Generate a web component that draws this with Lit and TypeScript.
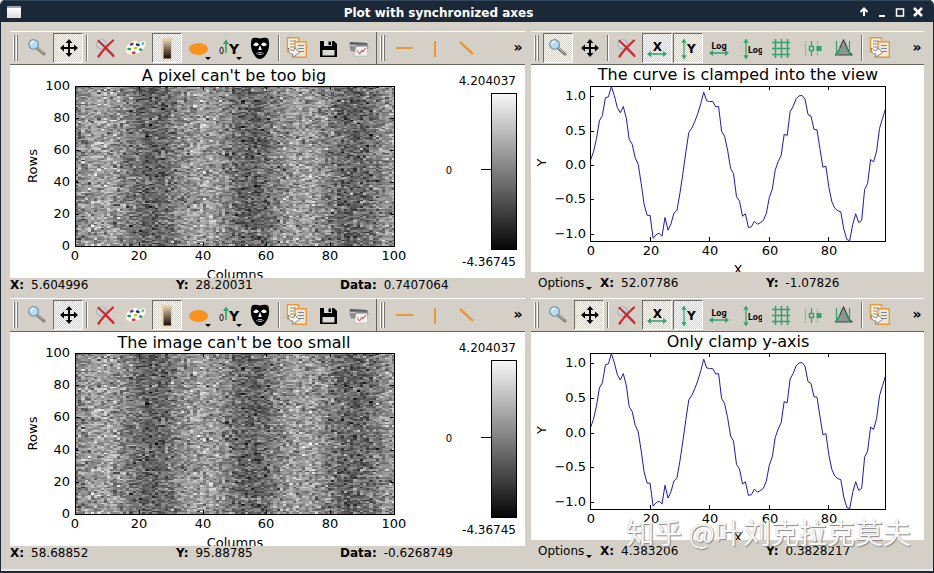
import { LitElement, html, svg, css, nothing } from "lit";
import type { TemplateResult, SVGTemplateResult } from "lit";
import { customElement, property } from "lit/decorators.js";
import { classMap } from "lit/directives/class-map.js";

const GREEN = "#2fa36b";
const ORANGE = "#e6993a";

const lens = svg`
  <path d="M12 12 L19 18" stroke="#8b8378" stroke-width="3" stroke-linecap="round"/>
  <path d="M13 12 L18 16.5" stroke="#c9c4ba" stroke-width="1" stroke-linecap="round"/>
  <circle cx="8.6" cy="8.4" r="4.8" fill="#b4dcf2" stroke="#8299ac" stroke-width="1.3"/>
  <path d="M5.6 8.4 A3.2 3.2 0 0 1 9 5.4" fill="none" stroke="#f2fbff" stroke-width="1.5"/>`;

const hArrow = svg`<path d="M2 18 l4 -3 v2.2 h12 v-2.2 l4 3 l-4 3 v-2.2 h-12 v2.2 z" fill="${GREEN}"/>`;
const vArrow = svg`<path d="M8 2.5 l2.6 4.2 h-2 v12.6 h2 L8 23.5 l-2.6 -4.2 h2 V6.7 h-2 z" fill="${GREEN}"/>`;

const ICONS: Record<string, SVGTemplateResult> = {
  zoom: lens,
  pan: svg`
    <path d="M5 12 H21 M13 4 V20" stroke="#000" stroke-width="2"/>
    <path d="M4 12 l4 -3.4 v6.8 z M22 12 l-4 -3.4 v6.8 z M13 3 l-3.4 4 h6.8 z M13 21 l-3.4 -4 h6.8 z"/>`,
  reset: svg`
    <g opacity=".45">${lens}</g>
    <path d="M5.5 5 C10 9 15 14 20.5 20 M20 4.5 C15 9 10 14 5.5 20.5" fill="none" stroke="#cf2531" stroke-width="2.2" stroke-linecap="round"/>`,
  palette: svg`
    <path d="M1.5 14.5 C1 10 6 5 11 4.5 C13.5 4.3 13.5 6.8 15.5 6.3 C17.5 5.8 19 3.4 21 5 C24 8 20.5 14 15 17 C10 20 2 20 1.5 14.5 z" fill="#fffdf6" stroke="#efc68f" stroke-width=".8"/>
    <g stroke-width="2.5" stroke-linecap="round">
      <path d="M7 8.5 l1.5 -.6" stroke="#5b3fa8"/><path d="M13 8.6 l1.5 .3" stroke="#1a2f7c"/>
      <path d="M18.6 8 l.6 -.7" stroke="#35c4dc"/><path d="M4.5 13 l1.4 0" stroke="#2e9b52"/>
      <path d="M11 12.3 l1.2 -.4" stroke="#b4d62b"/><path d="M16 13.5 l1.2 .2" stroke="#1c9e86"/>
      <path d="M9 16.7 l1.4 0" stroke="#d1356f"/>
    </g>`,
  colormap: svg`
    <defs><linearGradient id="cm" x1="0" y1="0" x2="0" y2="1">
      <stop offset="0" stop-color="#e9d6bd"/><stop offset=".45" stop-color="#857363"/><stop offset="1" stop-color="#0c0706"/>
    </linearGradient></defs>
    <rect x="8" y="3" width="8.5" height="20" fill="url(#cm)" stroke="#f3c48b" stroke-width="1.2"/>`,
  ellipse: svg`<ellipse cx="12.5" cy="13" rx="9.6" ry="6" fill="#f7931e"/>`,
  yaxis: svg`
    <text x="2" y="18" font-size="8">0</text>
    <path d="M9 17 V7" stroke="${GREEN}" stroke-width="1.6"/><path d="M9 3.5 l3 4.5 h-6 z" fill="${GREEN}"/>
    <text x="12" y="18" font-size="14" font-weight="bold">Y</text>`,
  mask: svg`
    <path d="M4 2.5 C7 1 9 2.4 12 2.4 S17 1 20 2.5 C22 8 21 12 19.5 16 C17.5 20 15 23 12 23 S6.5 20 4.5 16 C3 12 2 8 4 2.5 z"/>
    <path d="M5 9 Q8 4.5 11 8.5 Q8.5 11.5 5 9 z M19 9 Q16 4.5 13 8.5 Q15.5 11.5 19 9 z" fill="#fff"/>
    <path d="M12 9 l1.8 5 h-3.6 z M8 17.5 q4 -2.6 8 0 q-4 2.7 -8 0 z" fill="#fff"/>
    <path d="M9 17.5 h6" stroke="#000" stroke-width=".8"/>`,
  copy: svg`
    <g stroke="${ORANGE}" stroke-width="1.4">
      <path d="M2.5 1.7 h11 v14 h-11 z" fill="#fdf4e3"/>
      <path d="M10 5.7 h11.3 v15.5 h-11.3 z" fill="#eee7da"/>
    </g>
    <path d="M5 5 h6 M5 8 h4 M5 11 h4 M13 9.5 h6 M13 12.5 h6 M14 15.5 h5" stroke="#7d8790" stroke-width="1.2"/>
    <path d="M3.5 12 C3 16 5 18 8 18 L7.5 21.5 L14.5 16.5 L9.5 11.5 L9 14.5 C6.5 14.8 5 14 3.5 12 z" fill="#fff" stroke="#6f675c" stroke-width=".8"/>`,
  save: svg`
    <path d="M4 5 h14 l3 3 v13 h-17 z"/>
    <path d="M8 5 h8 v5 h-8 z M6.5 14 h12 v5.5 h-12 z" fill="#dedad3"/>
    <path d="M12.5 5.5 h2.5 v3.6 h-2.5 z"/>`,
  print: svg`
    <path d="M3 6 l17 1 l1.5 4 l-2 4.5 h-15.5 l-1.5 -5 z" fill="#8a8c8e"/>
    <path d="M3 6 l17 1 l.7 1.8 l-18 -.6 z" fill="#5c5f63"/>
    <path d="M2.6 9.5 l6 0" stroke="#c9cbcc" stroke-width="1"/>
    <path d="M9 10.5 h11 l.8 9.5 h-13.5 z" fill="#f5f2f2" stroke="#b5b0b0" stroke-width=".6"/>
    <path d="M10 14.5 l2.5 3.5 l2.5 -4 l1 2 l2.5 -4" fill="none" stroke="#d5404c" stroke-width="1"/>`,
  hline: svg`<path d="M4 12 H21" stroke="${ORANGE}" stroke-width="2"/>`,
  vline: svg`<path d="M12 5 V21" stroke="${ORANGE}" stroke-width="2"/>`,
  dline: svg`<path d="M6 6 L19 18" stroke="${ORANGE}" stroke-width="2.4"/>`,
  xauto: svg`<text x="12.5" y="15" font-size="12" font-weight="bold" text-anchor="middle">X</text>${hArrow}`,
  yauto: svg`${vArrow}<text x="11" y="17" font-size="12" font-weight="bold">Y</text>`,
  xlog: svg`<text class="log" x="12" y="13" text-anchor="middle">Log</text><g transform="translate(0 -1)">${hArrow}</g>`,
  ylog: svg`${vArrow}<text class="log" x="10" y="17">Log</text>`,
  grid: svg`<path d="M6.5 3 V22 M12.5 3 V22 M18.5 3 V22 M3 6.5 H21 M3 12.5 H21 M3 18.5 H21" stroke="${GREEN}" stroke-width="1.5"/>`,
  points: svg`
    <path d="M5.5 5 V20 M17.5 5 V20" stroke="#82c5a4" stroke-width="1.2"/>
    <path d="M11.5 5 V20" stroke="${GREEN}" stroke-width="1.2"/>
    <rect x="9.5" y="10.5" width="4" height="4" fill="#d4d0c8" stroke="${GREEN}" stroke-width="1.4"/>
    <rect x="16.5" y="10" width="5" height="5" fill="${GREEN}"/>`,
  peak: svg`
    <path d="M4 19 C8 17 9.5 9 12.5 4 C15.5 9 17 17 21.5 19 z" fill="#8e9492" stroke="#3d4442" stroke-width="1.2"/>
    <path d="M5.5 5 V19 L9 12 M18.5 5 V19 L15 11" fill="none" stroke="${GREEN}" stroke-width="1.2"/>`,
};

interface Tool {
  icon: string;
  label: string;
  menu?: boolean;
}
type Item = Tool | "sep";

const IMAGE_TOOLS: Item[] = [
  { icon: "zoom", label: "Zoom" },
  { icon: "pan", label: "Pan" },
  "sep",
  { icon: "reset", label: "Reset zoom" },
  { icon: "palette", label: "Colormap" },
  { icon: "colormap", label: "Colorbar" },
  { icon: "ellipse", label: "Aspect ratio", menu: true },
  { icon: "yaxis", label: "Y axis orientation", menu: true },
  { icon: "mask", label: "Mask" },
  "sep",
  { icon: "copy", label: "Copy" },
  { icon: "save", label: "Save" },
  { icon: "print", label: "Print" },
];
const PROFILE_TOOLS: Item[] = [
  { icon: "hline", label: "Horizontal profile" },
  { icon: "vline", label: "Vertical profile" },
  { icon: "dline", label: "Line profile" },
];
const CURVE_TOOLS: Item[] = [
  { icon: "zoom", label: "Zoom" },
  { icon: "pan", label: "Pan" },
  "sep",
  { icon: "reset", label: "Reset zoom" },
  { icon: "xauto", label: "X autoscale" },
  { icon: "yauto", label: "Y autoscale" },
  { icon: "xlog", label: "X log scale" },
  { icon: "ylog", label: "Y log scale" },
  { icon: "grid", label: "Grid" },
  { icon: "points", label: "Curve style" },
  { icon: "peak", label: "Fit" },
  "sep",
  { icon: "copy", label: "Copy" },
];

@customElement("tool-bar")
class ToolBar extends LitElement {
  @property({ attribute: false }) items: Item[] = [];
  @property({ attribute: false }) pressed: string[] = [];
  @property({ type: Boolean }) overflow = false;

  static styles = css`
    :host { display: flex; gap: 1px; align-items: center; height: 32px; }
    .handle {
      box-sizing: border-box; width: 5px; height: 26px; margin: 0 3px;
      border-left: 1px solid #fff;
      background: linear-gradient(90deg, #777 1px, #d4d0c8 1px 2px, #fff 2px 3px, #777 3px);
    }
    .sep { width: 1px; height: 26px; margin: 0 1px 0 2px; background: #77736c; border-right: 1px solid #fff; }
    button {
      box-sizing: border-box; position: relative; width: 30px; height: 30px;
      margin: 0; padding: 0; border: 1px solid transparent; background: none;
      display: grid; place-items: center; flex: none;
    }
    .on {
      border-color: #706c66 #fff #fff #706c66;
      background: repeating-conic-gradient(#fff 0 25%, #d4d0c8 0 50%) 0 0 / 2px 2px;
    }
    svg { display: block; width: 24px; height: 24px; font-family: "DejaVu Sans", sans-serif; }
    .log { font: bold 9px Roboto, sans-serif; }
    .arrow {
      position: absolute; right: 1px; bottom: 2px;
      border: 3px solid transparent; border-top-color: #000; border-bottom: 0;
    }
    .more {
      width: 14px; margin-left: auto; padding-bottom: 3px;
      font: bold 14px/20px "DejaVu Sans", sans-serif; color: #000;
    }
  `;

  render() {
    return html`
      <span class="handle"></span>
      ${this.items.map((item) =>
        item === "sep"
          ? html`<span class="sep"></span>`
          : html`<button
              type="button"
              class=${classMap({ on: this.pressed.includes(item.icon) })}
              aria-label=${item.label}
              aria-pressed=${this.pressed.includes(item.icon)}
            >
              <svg viewBox="0 0 24 24" aria-hidden="true">${ICONS[item.icon]}</svg>
              ${item.menu ? html`<span class="arrow"></span>` : nothing}
            </button>`
      )}
      ${this.overflow ? html`<button type="button" class="more" aria-label="More tools">»</button>` : nothing}
    `;
  }
}

/* Small seeded generator, so the noise is the same on every load. */
function noise(seed: number): () => number {
  let s = seed;
  const uniform = () => {
    s = (s + 0x6d2b79f5) | 0;
    let t = Math.imul(s ^ (s >>> 15), 1 | s);
    t = (t + Math.imul(t ^ (t >>> 7), 61 | t)) ^ t;
    return ((t ^ (t >>> 14)) >>> 0) / 4294967296;
  };
  return () => Math.sqrt(-2 * Math.log(1 - uniform())) * Math.cos(2 * Math.PI * uniform());
}

/* One path for each grey level of a 100 x 100 image of sin(x / 5) plus noise. */
function imageLevels(): { shade: string; d: string }[] {
  const next = noise(42);
  const levels: string[] = Array(40).fill("");
  for (let y = 0; y < 100; y++) {
    for (let x = 0; x < 100; x++) {
      const value = (Math.sin(x / 5) + next() + 4.367) / 8.571;
      const level = Math.max(0, Math.min(39, Math.floor(value * 40)));
      levels[level] += `M${x} ${y}h1v1h-1z`;
    }
  }
  return levels.map((d, i) => {
    const g = Math.round((i * 255) / 39);
    return { shade: `rgb(${g},${g},${g})`, d };
  });
}
const LEVELS = imageLevels();

/* Depth of each curve sample below the top of the axes, which are 465 units high. */
const CURVE = [
  221, 196, 156, 103, 87, 34, 31, 0, 27, 63, 79, 60, 95, 159, 173, 214, 233, 291, 353, 386,
  387, 455, 445, 440, 449, 393, 431, 412, 380, 372, 321, 261, 196, 138, 125, 105, 81, 51, 17, 43,
  45, 45, 61, 60, 134, 149, 191, 246, 261, 331, 344, 389, 382, 423, 421, 404, 413, 409, 402, 381,
  333, 308, 251, 225, 206, 143, 147, 76, 60, 37, 28, 27, 38, 84, 89, 129, 130, 186, 242, 239,
  303, 346, 365, 373, 376, 428, 459, 463, 414, 382, 408, 402, 309, 291, 219, 226, 194, 126, 96, 67,
];

const plotStyles = css`
  :host { display: block; background: #fff; }
  svg { display: block; width: 100%; height: auto; font-family: "DejaVu Sans", sans-serif; font-size: 13px; }
  .title { font-size: 16px; }
  .small { font-size: 10px; }
  .bar { font-size: 12px; }
  .mid { text-anchor: middle; }
  .end { text-anchor: end; }
  .frame { fill: none; stroke: #000; stroke-width: 1; shape-rendering: crispEdges; }
  .curve { fill: none; stroke: #1c1cae; stroke-width: 1; stroke-linejoin: round; }
  .cells { shape-rendering: crispEdges; }
`;

@customElement("image-plot")
class ImagePlot extends LitElement {
  @property() heading = "";
  @property({ type: Number }) depth = 160;

  static styles = plotStyles;

  render(): TemplateResult {
    const h = this.depth;
    const bottom = 21 + h;
    const ticks = [0, 20, 40, 60, 80, 100];
    const yOf = (v: number) => Math.round(bottom - (v * h) / 100);
    return html`<svg viewBox="0 0 515 ${h + 53}" role="img" aria-label=${this.heading}>
      <defs><linearGradient id="grey" x1="0" y1="0" x2="0" y2="1">
        <stop offset="0" stop-color="#f8f8f8"/><stop offset="1" stop-color="#060606"/>
      </linearGradient></defs>
      <text class="title mid" x="224" y="16">${this.heading}</text>
      <g class="cells" transform="translate(65 21) scale(3.2 ${h / 100})">
        ${LEVELS.map((l) => svg`<path d=${l.d} fill=${l.shade}/>`)}
      </g>
      <rect class="frame" x="65" y="21" width="319" height=${h}/>
      ${ticks.map((t) => {
        const x = 65 + Math.round(t * 3.19);
        return svg`
          <text class="mid" x=${x} y=${bottom + 14}>${t}</text>
          <text class="end" x="60" y=${yOf(t) + 4}>${t}</text>
          <path class="frame" d="M${x} ${bottom}v-4M${x} 21v4M65 ${yOf(t)}h4M384 ${yOf(t)}h-4"/>`;
      })}
      <text class="mid" x="225" y=${h + 54}>Columns</text>
      <text class="mid" transform="translate(27 ${21 + h / 2}) rotate(-90)">Rows</text>
      <text class="bar end" x="506" y="20">4.204037</text>
      <rect x="481" y="28" width="25" height=${h - 4} fill="url(#grey)"/>
      <rect class="frame" x="481" y="28" width="25" height=${h - 4}/>
      <path class="frame" d="M471 ${h - 56}h10"/>
      <text class="small mid" x="439" y=${h - 51}>0</text>
      <text class="bar end" x="506" y=${h + 41}>-4.36745</text>
    </svg>`;
  }
}

@customElement("curve-plot")
class CurvePlot extends LitElement {
  @property() heading = "";
  @property({ type: Number }) depth = 155;

  static styles = plotStyles;

  render(): TemplateResult {
    const h = this.depth;
    const bottom = 21 + h;
    const points = CURVE.map((c, i) => `${(59.5 + (i * 295) / 99).toFixed(1)},${(21.5 + (c * h) / 465).toFixed(1)}`);
    const yTicks = [1, 0.5, 0, -0.5, -1];
    return html`<svg viewBox="0 0 393 ${h + 52}" role="img" aria-label=${this.heading}>
      <text class="title mid" x="207" y="15">${this.heading}</text>
      <polyline class="curve" points=${points.join(" ")}/>
      <rect class="frame" x="59" y="21" width="295" height=${h}/>
      ${[0, 20, 40, 60, 80].map((t) => {
        const x = Math.round(59 + t * 2.98);
        return svg`
          <text class="mid" x=${x + 1} y=${bottom + 14}>${t}</text>
          <path class="frame" d="M${x} ${bottom}v-4M${x} 21v4"/>`;
      })}
      ${yTicks.map((t) => {
        const y = Math.round(21 + ((237 - t * 206) * h) / 465);
        return svg`
          <text class="end" x="55" y=${y + 4}>${t.toFixed(1).replace("-", "−")}</text>
          <path class="frame" d="M59 ${y}h4"/>`;
      })}
      <text class="mid" x="207" y=${h + 54}>X</text>
      <text class="mid" transform="translate(15 ${20 + h / 2}) rotate(-90)">Y</text>
    </svg>`;
  }
}

@customElement("app-root")
class AppRoot extends LitElement {
  static styles = css`
    :host { display: block; font: 12px/14px "DejaVu Sans", sans-serif; color: #000; }
    .window {
      box-sizing: border-box; min-height: 100vh; position: relative;
      display: flex; flex-direction: column;
      background: #d4d0c8; border: solid #1c2a3a; border-width: 0 1px 2px;
      border-radius: 5px 5px 0 0; overflow: hidden;
    }
    header {
      display: flex; align-items: center; height: 22px; padding: 0 7px 0 6px;
      box-sizing: border-box; border-top: 1px solid #33475a;
      background: #1b2838; color: #fff;
    }
    .app { width: 14px; height: 12px; background: linear-gradient(#9aa5b5 0 2px, #fff 2px, #dcdcd6); }
    h1 { flex: 1; margin: 0; padding-top: 2px; text-align: center; font-size: 12px; line-height: 14px; }
    .wm { display: flex; gap: 2px; }
    .wm button { width: 16px; height: 16px; padding: 0; border: 0; background: none; }
    .wm svg { display: block; width: 16px; height: 16px; fill: none; stroke: #fff; stroke-width: 2; }
    main {
      flex: 1; padding: 9px 9px 0;
      display: grid; grid-template-columns: minmax(0, 515fr) minmax(0, 393fr); column-gap: 6px; align-content: start;
    }
    .tools { display: flex; border-top: 1px solid #fff; border-bottom: 1px solid #67645f; }
    .tools .first { border-right: 1px solid #67645f; padding-right: 2px; }
    .tools .last { flex: 1; }
    .status { display: grid; grid-template-columns: 166fr 164fr 185fr; height: 20px; }
    .status.curve { grid-template-columns: 64px 166fr 158fr; height: 22px; padding: 4px 0 0 5px; }
    .field { display: flex; gap: 7px; white-space: pre; }
    .options {
      position: relative; height: 14px; padding: 0 0 0 2px; border: 0; background: none;
      font: inherit; color: inherit; text-align: left;
    }
    .options::after {
      content: ""; position: absolute; left: 50px; bottom: 0;
      border: 3px solid transparent; border-top-color: #000; border-bottom: 0;
    }
    .foot { height: 2px; background: #e8ebee; }
    .mark {
      position: absolute; right: 22px; bottom: 23px; pointer-events: none; white-space: nowrap;
      font: 28px/32px "Noto Sans CJK SC", sans-serif; color: #f8f8f8;
      text-shadow: 1px 1px 1px #888, 0 0 1px #aaa;
    }
  `;

  private field(name: string, value: string) {
    return html`<span class="field"><b>${name}:</b><span>${value}</span></span>`;
  }

  private imagePanel(heading: string, depth: number, x: string, y: string, data: string) {
    return html`<section>
      <div class="tools">
        <tool-bar class="first" role="toolbar" .items=${IMAGE_TOOLS} .pressed=${["pan", "colormap"]}></tool-bar>
        <tool-bar class="last" role="toolbar" .items=${PROFILE_TOOLS} overflow></tool-bar>
      </div>
      <image-plot .heading=${heading} .depth=${depth}></image-plot>
      <div class="status">${this.field("X", x)}${this.field("Y", y)}${this.field("Data", data)}</div>
    </section>`;
  }

  private curvePanel(heading: string, depth: number, mode: string, x: string, y: string) {
    return html`<section>
      <div class="tools">
        <tool-bar class="last" role="toolbar" .items=${CURVE_TOOLS} .pressed=${[mode, "xauto", "yauto"]} overflow></tool-bar>
      </div>
      <curve-plot .heading=${heading} .depth=${depth}></curve-plot>
      <div class="status curve">
        <button type="button" class="options">Options</button>
        ${this.field("X", x)}${this.field("Y", y)}
      </div>
    </section>`;
  }

  render() {
    return html`<div class="window">
      <header>
        <span class="app"></span>
        <h1>Plot with synchronized axes</h1>
        <div class="wm">
          <button type="button" aria-label="Shade"><svg viewBox="0 0 16 16"><path d="M8 12 V5 M4.5 8 L8 4.5 L11.5 8"/></svg></button>
          <button type="button" aria-label="Minimize"><svg viewBox="0 0 16 16"><path d="M5 12 H11"/></svg></button>
          <button type="button" aria-label="Maximize"><svg viewBox="0 0 16 16"><path d="M4.5 5 H11.5 V12 H4.5 z" stroke-width="1.5"/></svg></button>
          <button type="button" aria-label="Close"><svg viewBox="0 0 16 16"><path d="M4 4 L12 12 M12 4 L4 12" stroke-width="2.5"/></svg></button>
        </div>
      </header>
      <main>
        ${this.imagePanel("A pixel can't be too big", 160, "5.604996", "28.20031", "0.7407064")}
        ${this.curvePanel("The curve is clamped into the view", 155, "zoom", "52.07786", "-1.07826")}
        ${this.imagePanel("The image can't be too small", 161, "58.68852", "95.88785", "-0.6268749")}
        ${this.curvePanel("Only clamp y-axis", 156, "pan", "4.383206", "0.3828217")}
      </main>
      <div class="foot"></div>
      <span class="mark">知乎 @叶刘克拉克莫夫</span>
    </div>`;
  }
}
